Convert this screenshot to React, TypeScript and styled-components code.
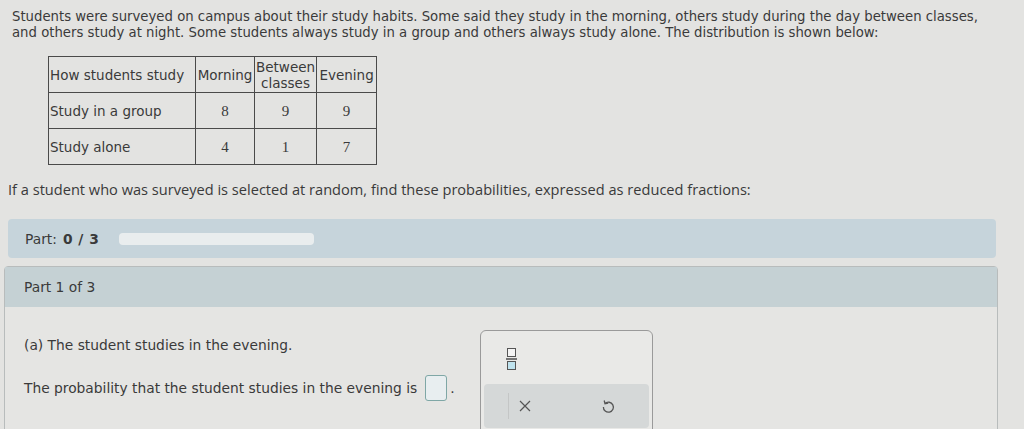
import React from "react";
import styled, { createGlobalStyle } from "styled-components";

const GlobalStyle = createGlobalStyle`
  html, body {
    margin: 0;
    padding: 0;
    background: #e3e3e1;
  }
  body {
    font-family: "DejaVu Sans", Verdana, sans-serif;
    color: #3a3a3a;
    width: 1024px;
    height: 429px;
    overflow: hidden;
  }
`;

const Page = styled.div`
  display: flex;
  flex-direction: column;
  align-items: flex-start;
  padding: 9px 0 0 0;
`;

const Intro = styled.p`
  margin: 0 0 0 12px;
  font-size: 13.25px;
  line-height: 16px;
  width: 980px;
`;

const Table = styled.table`
  margin: 15px 0 0 48px;
  border-collapse: collapse;
  table-layout: fixed;
  color: #3a3a3a;
`;

interface CellProps {
  readonly $w: number;
  readonly $num?: boolean;
  readonly $left?: boolean;
}

const Cell = styled.td<CellProps>`
  border: 1px solid #4a4a4a;
  width: ${p => p.$w}px;
  height: 36px;
  padding: 0 1px;
  box-sizing: border-box;
  text-align: ${p => (p.$left ? "left" : "center")};
  font-family: ${p => (p.$num ? '"Liberation Serif", "Times New Roman", serif' : "inherit")};
  font-size: ${p => (p.$num ? "15px" : "13.5px")};
  line-height: 16px;
`;

const Prompt = styled.p`
  margin: 16px 0 0 8px;
  font-size: 14.6px;
  line-height: 16px;
  font-family: "Open Sans", "DejaVu Sans", sans-serif;
`;

const PartBar = styled.div`
  margin: 22px 0 0 8px;
  width: 988px;
  height: 39px;
  background: #c6d4db;
  border-radius: 4px;
  display: flex;
  align-items: center;
  padding-left: 17px;
  box-sizing: border-box;
  font-size: 13.8px;
`;

const Bold = styled.b`
  font-weight: bold;
  margin-left: 6px;
  word-spacing: 1px;
`;

const Track = styled.div`
  width: 195px;
  height: 12px;
  border-radius: 4px;
  background: #e9edee;
  margin-left: 20px;
`;

const PartCard = styled.div`
  margin: 8px 0 0 4px;
  width: 994px;
  border: 1px solid #b8bcbc;
  border-radius: 4px 4px 0 0;
  display: flex;
  flex-direction: column;
  height: 200px;
  box-sizing: border-box;
`;

const PartHeader = styled.div`
  height: 40px;
  background: #c5d1d4;
  display: flex;
  align-items: center;
  padding-left: 19px;
  font-size: 13.8px;
`;

const PartBody = styled.div`
  display: flex;
  background: #e5e5e3;
  flex: 1;
`;

const Question = styled.div`
  width: 475px;
  padding: 30px 0 0 19px;
  box-sizing: border-box;
  font-size: 13.8px;
  line-height: 16px;
`;

const Answer = styled.div`
  margin-top: 22px;
  display: flex;
  align-items: center;
`;

const InputBox = styled.span`
  display: inline-block;
  width: 20px;
  height: 24px;
  border: 1px solid #7fa7a6;
  border-radius: 3px;
  background: #e8eef0;
  margin: 0 3px 0 8px;
`;

const Tools = styled.div`
  margin-top: 23px;
  width: 173px;
  border: 1px solid #9a9a9a;
  border-radius: 6px;
  background: #e9e9e7;
  display: flex;
  flex-direction: column;
  padding: 3px;
  box-sizing: border-box;
`;

const FracIcon = styled.div`
  height: 50px;
  display: flex;
  align-items: center;
  padding-left: 22px;
`;

const ButtonRow = styled.div`
  height: 44px;
  background: #d5d8d8;
  border-radius: 4px;
  display: flex;
  align-items: center;
`;

const ToolButton = styled.button<{ $w: number; $offset?: number }>`
  width: ${p => p.$w}px;
  margin-left: ${p => p.$offset ?? 0}px;
  height: 100%;
  border: none;
  background: transparent;
  display: flex;
  align-items: center;
  justify-content: center;
  padding: 0;
  color: #444;
`;

const Divider = styled.div`
  width: 1px;
  height: 26px;
  background: #c4c6c6;
  margin-left: 24px;
`;

const widths = [59, 62, 60];

const rows = [
  { label: "Study in a group", values: ["8", "9", "9"] },
  { label: "Study alone", values: ["4", "1", "7"] },
];

export default function App() {
  return (
    <>
      <GlobalStyle />
      <Page>
        <Intro>
          Students were surveyed on campus about their study habits. Some said they study in the morning, others
          study during the day between classes, and others study at night. Some students always study in a group
          and others always study alone. The distribution is shown below:
        </Intro>
        <Table>
          <tbody>
            <tr>
              <Cell $w={147} $left>How students study</Cell>
              <Cell $w={59}>Morning</Cell>
              <Cell $w={62}>Between classes</Cell>
              <Cell $w={60}>Evening</Cell>
            </tr>
            {rows.map(r => (
              <tr key={r.label}>
                <Cell $w={147} $left>{r.label}</Cell>
                {r.values.map((v, i) => (
                  <Cell key={i} $w={widths[i]} $num>{v}</Cell>
                ))}
              </tr>
            ))}
          </tbody>
        </Table>
        <Prompt>
          If a student who was surveyed is selected at random, find these probabilities, expressed as reduced
          fractions:
        </Prompt>
        <PartBar>
          Part:<Bold>0 / 3</Bold>
          <Track />
        </PartBar>
        <PartCard>
          <PartHeader>Part 1 of 3</PartHeader>
          <PartBody>
            <Question>
              (a) The student studies in the evening.
              <Answer>
                The probability that the student studies in the evening is
                <InputBox />.
              </Answer>
            </Question>
            <Tools>
              <FracIcon>
                <svg width="12" height="24" viewBox="0 0 12 24">
                  <rect x="1.5" y="1.5" width="8" height="8" fill="#f4f4f4" stroke="#555" strokeWidth="1" />
                  <line x1="0" y1="12" x2="11" y2="12" stroke="#444" strokeWidth="1.4" />
                  <rect x="1.5" y="14.5" width="8" height="8" fill="#bfe3ee" stroke="#555" strokeWidth="1" />
                </svg>
              </FracIcon>
              <ButtonRow>
                <Divider />
                <ToolButton $w={32}>
                  <svg width="12" height="12" viewBox="0 0 12 12">
                    <path d="M1 1 L11 11 M11 1 L1 11" stroke="#555" strokeWidth="1.2" />
                  </svg>
                </ToolButton>
                <ToolButton $w={80} $offset={27}>
                  <svg width="14" height="15" viewBox="0 0 14 15">
                    <path d="M4 4.5 A5 5 0 1 1 2.4 8" fill="none" stroke="#555" strokeWidth="1.3" />
                    <path d="M3.2 1.5 L4 4.7 L7.2 4" fill="none" stroke="#555" strokeWidth="1.3" />
                  </svg>
                </ToolButton>
              </ButtonRow>
            </Tools>
          </PartBody>
        </PartCard>
      </Page>
    </>
  );
}
